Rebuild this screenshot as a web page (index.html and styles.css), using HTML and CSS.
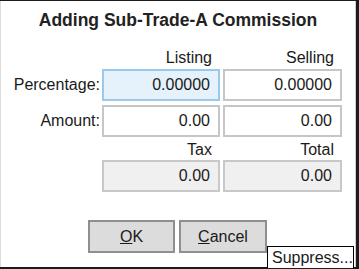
FILE: index.html
```html
<!DOCTYPE html>
<html>
<head>
<meta charset="utf-8">
<link rel="stylesheet" href="styles.css">
</head>
<body>
<div class="frame">
  <div class="dialog">
    <h1 class="title">Adding Sub-Trade-A Commission</h1>
    <div class="grid">
      <div class="cell"></div>
      <div class="head head-top">Listing</div>
      <div class="head head-top">Selling</div>

      <div class="label">Percentage:</div>
      <div class="box box-focus">0.00000</div>
      <div class="box">0.00000</div>

      <div class="label">Amount:</div>
      <div class="box">0.00</div>
      <div class="box">0.00</div>

      <div class="cell"></div>
      <div class="head head-mid">Tax</div>
      <div class="head head-mid">Total</div>

      <div class="cell"></div>
      <div class="box box-ro">0.00</div>
      <div class="box box-ro">0.00</div>
    </div>
    <div class="buttons">
      <button class="btn btn-ok"><u>O</u>K</button>
      <button class="btn btn-cancel"><u>C</u>ancel</button>
    </div>
    <div class="suppress">Suppress...</div>
  </div>
</div>
</body>
</html>
```

FILE: styles.css
```css
* { box-sizing: border-box; }
html, body { margin: 0; padding: 0; background: #ffffff; }
body {
  width: 359px;
  height: 269px;
  overflow: hidden;
  font-family: "Liberation Sans", Arial, sans-serif;
  font-size: 16px;
  color: #1a1a1a;
}
.frame {
  width: 359px;
  height: 269px;
  border-top: 1px solid #1c1c1c;
  border-right: 3px solid #1c1c1c;
  border-bottom: 2px solid #1c1c1c;
}
.dialog {
  position: relative;
  height: 100%;
  border-left: 1px solid #dcdcdc;
  border-right: 1px solid #cfcfcf;
  background: #ffffff;
}
.title {
  margin: 0;
  padding-top: 9px;
  height: 44px;
  text-align: center;
  font-size: 17.5px;
  line-height: 20px;
  font-weight: bold;
  color: #222222;
}
.grid {
  display: grid;
  grid-template-columns: 98px 118px 119px;
  grid-template-rows: 24px 32px 32px 23px 32px;
  column-gap: 3px;
  row-gap: 0;
}
.grid > :nth-child(n+7):nth-child(-n+9) { margin-top: 4px; }
.grid { grid-template-rows: 24px 32px 36px 23px 32px; }
.head {
  align-self: end;
  text-align: right;
  padding-right: 8px;
  line-height: 18px;
}
.head-top { padding-bottom: 2px; }
.head-mid { padding-bottom: 1px; }
.label {
  text-align: right;
  line-height: 32px;
  margin-right: -1px;
}
.box {
  height: 32px;
  border: 2px solid #c6c6c6;
  background: #ffffff;
  text-align: right;
  padding-right: 8px;
  line-height: 28px;
}
.box-focus {
  background: #e5f1fb;
  border-color: #99c9ef;
}
.box-ro {
  background: #f0f0f0;
  border-color: #c8c8c8;
}
.buttons {
  display: flex;
  justify-content: center;
  gap: 4px;
  margin-top: 28px;
  padding-right: 1px;
}
.btn {
  height: 33px;
  margin: 0;
  padding: 0;
  font-family: "Liberation Sans", Arial, sans-serif;
  font-size: 16px;
  color: #1a1a1a;
  background: #dcdcdc;
  border: 2px solid #8f8f8f;
  border-radius: 0;
}
.btn-ok { width: 87px; }
.btn-cancel { width: 88px; }
.suppress {
  position: absolute;
  left: 266px;
  top: 245px;
  width: 87px;
  height: 22px;
  border: 1px solid #000000;
  border-bottom: none;
  background: #ffffff;
  padding-left: 4px;
  line-height: 21px;
  color: #1a1a1a;
  white-space: nowrap;
}
```
